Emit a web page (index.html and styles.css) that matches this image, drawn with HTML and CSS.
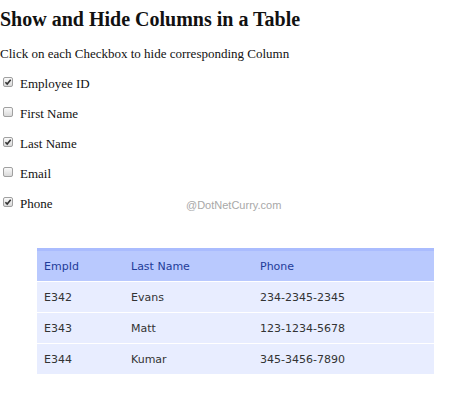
FILE: index.html
```html
<!DOCTYPE html>
<html>
<head>
<meta charset="utf-8">
<title>Show and Hide Columns in a Table</title>
<link rel="stylesheet" href="styles.css">
</head>
<body>
<h1 class="title">Show and Hide Columns in a Table</h1>
<p class="intro">Click on each Checkbox to hide corresponding Column</p>
<div class="options">
  <label class="option"><input class="cb" type="checkbox" checked>Employee ID</label>
  <label class="option"><input class="cb" type="checkbox">First Name</label>
  <label class="option"><input class="cb" type="checkbox" checked>Last Name</label>
  <label class="option"><input class="cb" type="checkbox">Email</label>
  <label class="option"><input class="cb" type="checkbox" checked>Phone</label>
</div>
<span class="watermark">@DotNetCurry.com</span>
<table class="box-table">
  <colgroup>
    <col class="c1"><col class="c2"><col class="c3">
  </colgroup>
  <thead>
    <tr><th>EmpId</th><th>Last Name</th><th>Phone</th></tr>
  </thead>
  <tbody>
    <tr><td>E342</td><td>Evans</td><td>234-2345-2345</td></tr>
    <tr><td>E343</td><td>Matt</td><td>123-1234-5678</td></tr>
    <tr><td>E344</td><td>Kumar</td><td>345-3456-7890</td></tr>
  </tbody>
</table>
</body>
</html>
```
FILE: styles.css
```css
html, body {
  margin: 0;
  padding: 0;
  background: #fff;
}
body {
  position: relative;
  font-family: "Liberation Serif", "Times New Roman", serif;
  color: #111;
}
.title {
  margin: 7px 0 0 0;
  font-size: 20px;
  line-height: 24px;
  font-weight: bold;
  color: #111;
}
.intro {
  margin: 15px 0 0 0;
  font-size: 13px;
  line-height: 16px;
}
.options {
  margin-top: 7px;
  display: flex;
  flex-direction: column;
}
.option {
  display: block;
  font-size: 13px;
  line-height: 30px;
  height: 30px;
}
.cb {
  -webkit-appearance: none;
  appearance: none;
  display: inline-block;
  width: 10px;
  height: 10px;
  margin: 0 7px 1px 3px;
  padding: 0;
  border: 0;
  vertical-align: baseline;
  background-image: url("data:image/svg+xml,%3Csvg xmlns='http://www.w3.org/2000/svg' width='10' height='10'%3E%3Cdefs%3E%3ClinearGradient id='g' x1='0' y1='0' x2='0' y2='1'%3E%3Cstop offset='0' stop-color='%23fbfbfb'/%3E%3Cstop offset='1' stop-color='%23d8d8d8'/%3E%3C/linearGradient%3E%3C/defs%3E%3Crect x='0.5' y='0.5' width='9' height='9' rx='1.5' fill='url(%23g)' stroke='%23a0a0a0'/%3E%3C/svg%3E");
}
.cb:checked {
  background-image: url("data:image/svg+xml,%3Csvg xmlns='http://www.w3.org/2000/svg' width='10' height='10'%3E%3Cdefs%3E%3ClinearGradient id='g' x1='0' y1='0' x2='0' y2='1'%3E%3Cstop offset='0' stop-color='%23fbfbfb'/%3E%3Cstop offset='1' stop-color='%23d8d8d8'/%3E%3C/linearGradient%3E%3C/defs%3E%3Crect x='0.5' y='0.5' width='9' height='9' rx='1.5' fill='url(%23g)' stroke='%23a0a0a0'/%3E%3Cpath d='M2.4 5.2 L4.2 7.1 L7.7 2.7' fill='none' stroke='%23333' stroke-width='1.6'/%3E%3C/svg%3E");
}
.watermark {
  position: absolute;
  left: 186px;
  top: 198px;
  font-family: "Liberation Sans", Arial, sans-serif;
  font-size: 11px;
  line-height: 14px;
  color: #a8a8a8;
}
.box-table {
  margin: 29px 0 0 37px;
  width: 397px;
  table-layout: fixed;
  border-collapse: collapse;
  font-family: "DejaVu Sans", Verdana, sans-serif;
  font-size: 11px;
  text-align: left;
}
.c1 { width: 87px; }
.c2 { width: 129px; }
.c3 { width: 181px; }
.box-table th {
  height: 30px;
  padding: 0 0 0 7px;
  font-weight: normal;
  font-size: 11px;
  color: #1f3c99;
  background: #b9c9fe;
  border-top: 3px solid #aabcfe;
  border-bottom: 1px solid #fff;
  vertical-align: middle;
}
.box-table td {
  height: 30px;
  padding: 0 0 0 7px;
  color: #333;
  background: #e8edff;
  border-bottom: 1px solid #fff;
  vertical-align: middle;
}
```
